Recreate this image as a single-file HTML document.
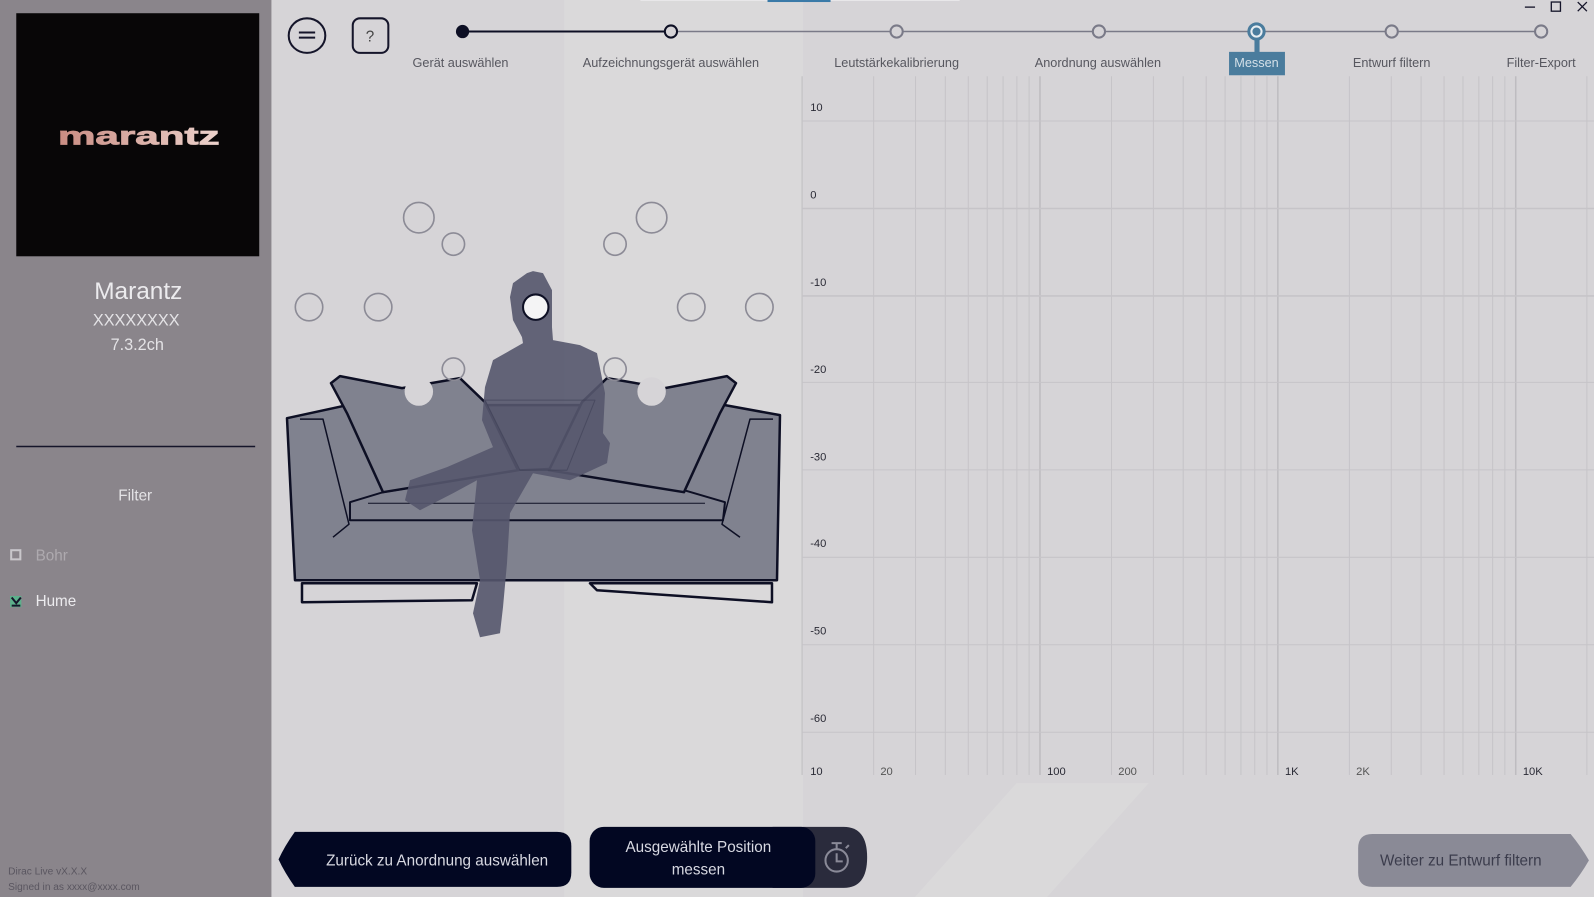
<!DOCTYPE html>
<html><head><meta charset="utf-8"><style>
html,body{margin:0;padding:0;width:1594px;height:897px;overflow:hidden;background:#d6d4d7}
svg{display:block}
text{font-family:"Liberation Sans",sans-serif}
</style></head><body>
<svg width="1594" height="897" viewBox="0 0 1568 882" preserveAspectRatio="none" xmlns="http://www.w3.org/2000/svg">
<defs><linearGradient id="lg" x1="0" x2="1" y1="0" y2="0"><stop offset="0" stop-color="#c98c82"/><stop offset="1" stop-color="#ecd2cc"/></linearGradient></defs>
<rect width="1568" height="882" fill="#d6d4d7"/>
<polygon points="555,0 790,0 790,882 555,882" fill="#dad9da"/>
<polygon points="900,882 1000,770 1130,770 1030,882" fill="#dad9da"/>
<rect width="267" height="882" fill="#8a858b"/>
<rect x="16" y="13" width="239" height="239" fill="#080607"/>
<text x="57" y="142" font-size="25" font-weight="bold" fill="url(#lg)" stroke="url(#lg)" stroke-width="0.8" textLength="159" lengthAdjust="spacingAndGlyphs">marantz</text>
<text x="136" y="294" text-anchor="middle" font-size="24" fill="#ecebee">Marantz</text>
<text x="134" y="320" text-anchor="middle" font-size="16" fill="#e4e3e6">XXXXXXXX</text>
<text x="135" y="344" text-anchor="middle" font-size="16" fill="#e4e3e6">7.3.2ch</text>
<line x1="16" y1="439" x2="251" y2="439" stroke="#15152a" stroke-width="1.5"/>
<text x="133" y="492" text-anchor="middle" font-size="15" fill="#e4e3e6">Filter</text>
<rect x="11" y="541" width="9" height="9" fill="none" stroke="#c9c7cb" stroke-width="2"/>
<text x="35" y="551" font-size="15" fill="#aeaaaf">Bohr</text>
<rect x="10" y="586" width="11" height="11" fill="#5cb08b"/>
<path d="M11.5,587.5 L16,593 L20.5,587.5 M11.5,595.5 L20,595.5" stroke="#15152a" stroke-width="2" fill="none"/>
<text x="35" y="596" font-size="15" fill="#ecebee">Hume</text>
<text x="8" y="860" font-size="10" fill="#5a5660">Dirac Live vX.X.X</text>
<text x="8" y="875" font-size="10" fill="#5a5660">Signed in as xxxx@xxxx.com</text>
<ellipse cx="302" cy="35" rx="18" ry="17" fill="none" stroke="#15152a" stroke-width="2"/>
<path d="M294,32 H310 M294,37 H310" stroke="#15152a" stroke-width="2"/>
<rect x="347" y="18" width="35" height="34" rx="7" fill="none" stroke="#15152a" stroke-width="2"/>
<text x="364" y="41" text-anchor="middle" font-size="15" fill="#444">?</text>
<rect x="630" y="0" width="314" height="1" fill="#e8e7e9"/>
<rect x="755" y="0" width="62" height="2" fill="#3a7aa8"/>
<path d="M1500,7 H1510" stroke="#15152a" stroke-width="1.3"/>
<rect x="1526" y="2" width="9" height="9" fill="none" stroke="#15152a" stroke-width="1.3"/>
<path d="M1552,2 L1561,11 M1561,2 L1552,11" stroke="#15152a" stroke-width="1.3"/>
<line x1="455" y1="31" x2="660" y2="31" stroke="#0d0f24" stroke-width="2"/>
<line x1="660" y1="31" x2="1516" y2="31" stroke="#7a7a88" stroke-width="1.5"/>
<circle cx="455" cy="31" r="6.5" fill="#0d0f24"/>
<circle cx="660" cy="31" r="6" fill="#d6d4d7" stroke="#0d0f24" stroke-width="2"/>
<circle cx="882" cy="31" r="6" fill="#d6d4d7" stroke="#7a7a88" stroke-width="2"/>
<circle cx="1081" cy="31" r="6" fill="#d6d4d7" stroke="#7a7a88" stroke-width="2"/>
<rect x="1234" y="36" width="5" height="16" fill="#4a7c9d"/>
<circle cx="1236" cy="31" r="9" fill="#4a7c9d"/>
<circle cx="1236" cy="31" r="5" fill="none" stroke="#e8eef2" stroke-width="2"/>
<circle cx="1369" cy="31" r="6" fill="#d6d4d7" stroke="#7a7a88" stroke-width="2"/>
<circle cx="1516" cy="31" r="6" fill="#d6d4d7" stroke="#7a7a88" stroke-width="2"/>
<rect x="1209" y="51" width="55" height="23" fill="#4a7c9d"/>
<g font-size="12.5" fill="#57575f" text-anchor="middle">
<text x="453" y="66">Gerät auswählen</text>
<text x="660" y="66">Aufzeichnungsgerät auswählen</text>
<text x="882" y="66">Leutstärkekalibrierung</text>
<text x="1080" y="66">Anordnung auswählen</text>
<text x="1236" y="66" fill="#d4e0e8">Messen</text>
<text x="1369" y="66">Entwurf filtern</text>
<text x="1516" y="66">Filter-Export</text>
</g>
<g stroke="#c6c4c8" stroke-width="1">
<line x1="789" y1="75" x2="789" y2="762" stroke="#bebcc0"/>
<line x1="859.4" y1="75" x2="859.4" y2="762"/><line x1="900.6" y1="75" x2="900.6" y2="762"/><line x1="929.9" y1="75" x2="929.9" y2="762"/><line x1="952.5" y1="75" x2="952.5" y2="762"/><line x1="971.1" y1="75" x2="971.1" y2="762"/><line x1="986.7" y1="75" x2="986.7" y2="762"/><line x1="1000.3" y1="75" x2="1000.3" y2="762"/><line x1="1012.3" y1="75" x2="1012.3" y2="762"/>
<line x1="1023" y1="75" x2="1023" y2="762" stroke="#bebcc0" stroke-width="1.5"/>
<line x1="1093.4" y1="75" x2="1093.4" y2="762"/><line x1="1134.6" y1="75" x2="1134.6" y2="762"/><line x1="1163.9" y1="75" x2="1163.9" y2="762"/><line x1="1186.5" y1="75" x2="1186.5" y2="762"/><line x1="1205.1" y1="75" x2="1205.1" y2="762"/><line x1="1220.7" y1="75" x2="1220.7" y2="762"/><line x1="1234.3" y1="75" x2="1234.3" y2="762"/><line x1="1246.3" y1="75" x2="1246.3" y2="762"/>
<line x1="1257" y1="75" x2="1257" y2="762" stroke="#bebcc0" stroke-width="1.5"/>
<line x1="1327.4" y1="75" x2="1327.4" y2="762"/><line x1="1368.6" y1="75" x2="1368.6" y2="762"/><line x1="1397.9" y1="75" x2="1397.9" y2="762"/><line x1="1420.5" y1="75" x2="1420.5" y2="762"/><line x1="1439.1" y1="75" x2="1439.1" y2="762"/><line x1="1454.7" y1="75" x2="1454.7" y2="762"/><line x1="1468.3" y1="75" x2="1468.3" y2="762"/><line x1="1480.3" y1="75" x2="1480.3" y2="762"/>
<line x1="1491" y1="75" x2="1491" y2="762" stroke="#bebcc0" stroke-width="1.5"/>
<line x1="1561" y1="75" x2="1561" y2="762"/>
<line x1="789" y1="119" x2="1568" y2="119"/><line x1="789" y1="205" x2="1568" y2="205" stroke-width="1.5"/><line x1="789" y1="291" x2="1568" y2="291" stroke-width="1.5"/><line x1="789" y1="376" x2="1568" y2="376"/><line x1="789" y1="462" x2="1568" y2="462"/><line x1="789" y1="548" x2="1568" y2="548"/><line x1="789" y1="634" x2="1568" y2="634"/><line x1="789" y1="720" x2="1568" y2="720"/>
</g>
<g font-size="11" fill="#2a2a35">
<text x="797" y="109">10</text><text x="797" y="195">0</text><text x="797" y="281">-10</text><text x="797" y="367">-20</text><text x="797" y="453">-30</text><text x="797" y="538">-40</text><text x="797" y="624">-50</text><text x="797" y="710">-60</text>
<text x="797" y="762">10</text><text x="866" y="762" fill="#555">20</text><text x="1030" y="762">100</text><text x="1100" y="762" fill="#555">200</text><text x="1264" y="762">1K</text><text x="1334" y="762" fill="#555">2K</text><text x="1498" y="762">10K</text>
</g>
<g transform="scale(0.98367)" stroke="#0d0f24" stroke-linejoin="round">
<path d="M302,583 L477,583 L472,600 L302,602 Z" fill="none" stroke-width="2.5"/>
<path d="M590,583 L772,583 L772,602 L597,590 Z" fill="none" stroke-width="2.5"/>
<path d="M287,418 L347,405 L725,405 L780,415 L777,580 L295,580 Z" fill="#80828f" stroke-width="2.5"/>
<path d="M350,502 L383,492 L518,470 L560,468 L650,480 L725,502 L723,520 L350,520 Z" fill="#80828f" stroke-width="2"/>
<line x1="368" y1="503" x2="705" y2="503" stroke-width="1"/>
<path d="M300,419 L323,419 L349,524 L333,537" fill="none" stroke-width="1.5"/>
<path d="M773,419 L750,419 L722,524 L740,537" fill="none" stroke-width="1.5"/>
<path d="M331,383 L340,376 L402,388 L460,378 L485,402 L518,470 L383,492 L347,413 Z" fill="#80828f" stroke-width="2.5"/>
<path d="M736,383 L727,376 L665,388 L607,378 L582,402 L549,470 L684,492 L720,413 Z" fill="#80828f" stroke-width="2.5"/>
<path d="M533,271 L543,273 L552,290 L552,327 L553,340 L580,345 L597,353 L605,393 L603,433 L610,443 L607,463 L570,480 L533,473 L510,513 L507,563 L503,607 L500,633 L480,637 L473,613 L480,580 L472,530 L477,480 L453,493 L420,510 L405,500 L410,480 L447,467 L493,447 L482,420 L485,387 L493,360 L523,343 L522,337 L513,320 L510,297 L513,283 L527,273 Z" fill="#55566d" fill-opacity="0.9" stroke="none"/>
<path d="M485,400 L595,400 L567,470 L520,470 Z" fill="none" stroke="#3e3f55" stroke-width="1" opacity="0.6"/>
</g>
<g fill="none" stroke="#8c8b96" stroke-width="1.6">
<circle cx="412" cy="214" r="15"/><circle cx="641" cy="214" r="15"/>
<circle cx="446" cy="240" r="11"/><circle cx="605" cy="240" r="11"/>
<circle cx="304" cy="302" r="13.5"/><circle cx="372" cy="302" r="13.5"/><circle cx="680" cy="302" r="13.5"/><circle cx="747" cy="302" r="13.5"/>
<circle cx="446" cy="363" r="11"/><circle cx="605" cy="363" r="11"/>
</g>
<circle cx="412" cy="385" r="14" fill="#d6d4d7"/><circle cx="641" cy="385" r="14" fill="#d6d4d7"/>
<circle cx="527" cy="302" r="12.5" fill="#f4f4f5" stroke="#0d0f24" stroke-width="2"/>
<path d="M290,818 L548,818 Q562,818 562,832 L562,858 Q562,872 548,872 L290,872 Q280,858 274,845 Q280,832 290,818 Z" fill="#020722"/>
<text x="430" y="851" text-anchor="middle" font-size="15" fill="#d8d9e2">Zurück zu Anordnung auswählen</text>
<path d="M760,813 L830,813 Q853,813 853,843 Q853,873 830,873 L760,873 Z" fill="#2a2b3c"/>
<rect x="580" y="813" width="222" height="60" rx="14" fill="#020722"/>
<text x="687" y="838" text-anchor="middle" font-size="15" fill="#d8d9e2">Ausgewählte Position</text>
<text x="687" y="860" text-anchor="middle" font-size="15" fill="#d8d9e2">messen</text>
<g fill="none" stroke="#8a8a98" stroke-width="2">
<circle cx="823" cy="846" r="11"/><path d="M823,839 V847 H829 M818,829 H828 M823,829 V835 M832,834 L835,831"/>
</g>
<path d="M1350,820 L1545,820 Q1555,832 1563,846 Q1555,860 1545,872 L1350,872 Q1336,872 1336,858 L1336,834 Q1336,820 1350,820 Z" fill="#8a8a96"/>
<text x="1437" y="851" text-anchor="middle" font-size="15" fill="#3b3c4c">Weiter zu Entwurf filtern</text>
</svg>
</body></html>
